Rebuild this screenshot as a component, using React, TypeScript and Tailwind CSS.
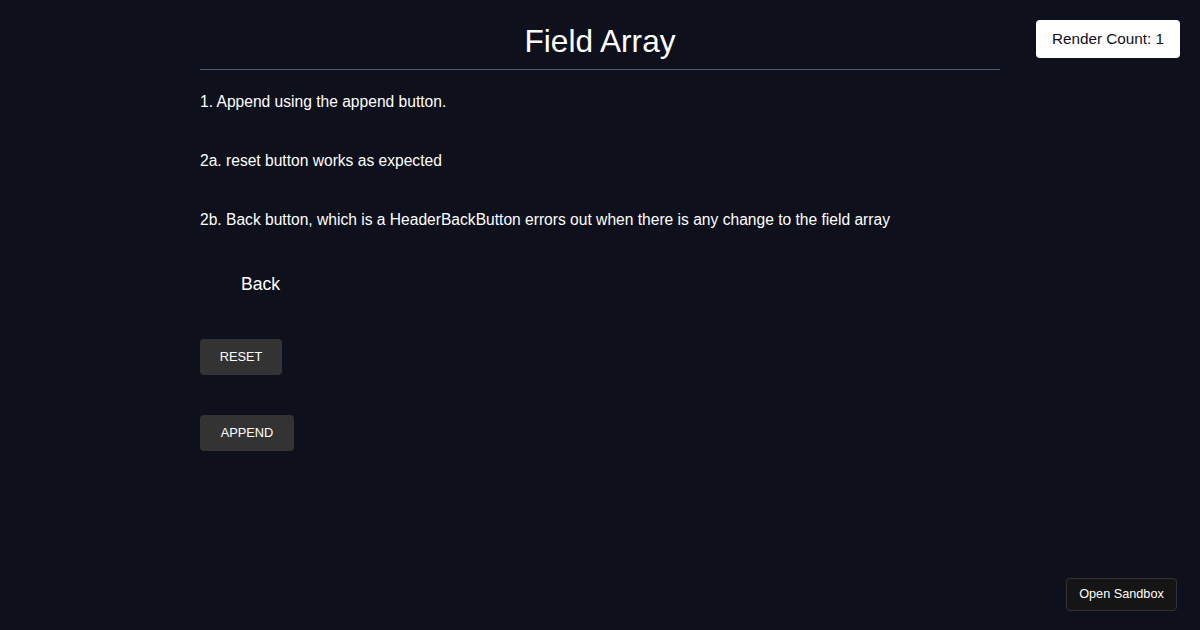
export default function App() {
  return (
    <div className="relative h-[630px] w-[1200px] overflow-hidden bg-[#0e101c] font-['Liberation_Sans',Arial,sans-serif] text-white">
      {/* Render count badge */}
      <div className="absolute right-[20px] top-[20px] flex h-[38px] w-[144px] items-center justify-center rounded-[4px] bg-white text-[15.3px] text-[#0e101c]">
        Render Count: 1
      </div>

      <div className="mx-auto w-[800px]">
        <h1 className="flex h-[70px] items-end justify-center border-b border-[#515b7c] pb-[11px] text-[31.6px] font-normal leading-none">
          Field Array
        </h1>

        <p className="mt-[22px] text-[15.6px] leading-[19px]">1. Append using the append button.</p>
        <p className="mt-[40px] text-[15.6px] leading-[19px]">2a. reset button works as expected</p>
        <p className="mt-[40px] text-[15.6px] leading-[19px]">
          2b. Back button, which is a HeaderBackButton errors out when there is any change to the field array
        </p>

        <div className="mt-[43px] flex h-[24px] items-center pl-[41px] text-[17.6px]">Back</div>

        <button className="mt-[43px] flex h-[36px] w-[82px] items-center justify-center rounded-[4px] bg-[#333333] text-[12.8px] uppercase text-white">
          Reset
        </button>
        <button className="mt-[40px] flex h-[36px] w-[94px] items-center justify-center rounded-[4px] bg-[#333333] text-[12.8px] uppercase text-white">
          Append
        </button>
      </div>

      <button className="absolute bottom-[19px] right-[23px] flex h-[33px] w-[111px] items-center justify-center rounded-[4px] border border-[#333333] bg-[#151515] text-[12.7px] text-white">
        Open Sandbox
      </button>
    </div>
  );
}
